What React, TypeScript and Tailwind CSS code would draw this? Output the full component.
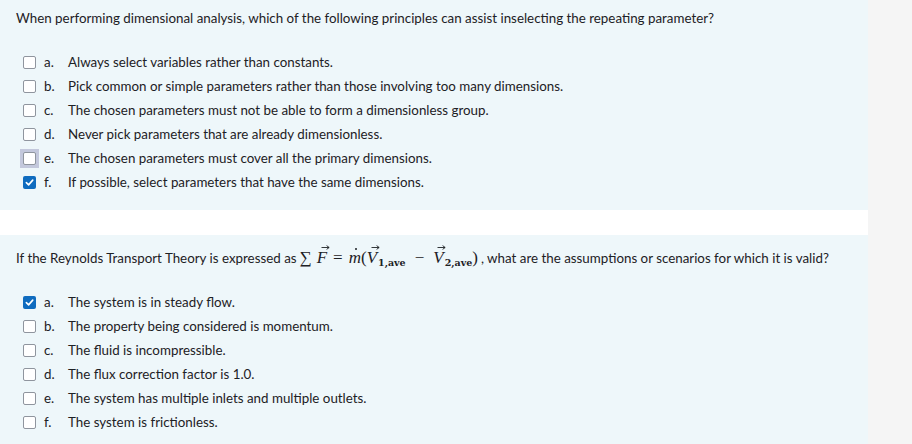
const q1 = [
  { l: "a.", t: "Always select variables rather than constants.", c: false },
  { l: "b.", t: "Pick common or simple parameters rather than those involving too many dimensions.", c: false },
  { l: "c.", t: "The chosen parameters must not be able to form a dimensionless group.", c: false },
  { l: "d.", t: "Never pick parameters that are already dimensionless.", c: false },
  { l: "e.", t: "The chosen parameters must cover all the primary dimensions.", c: false, focus: true },
  { l: "f.", t: "If possible, select parameters that have the same dimensions.", c: true },
];

const q2 = [
  { l: "a.", t: "The system is in steady flow.", c: true },
  { l: "b.", t: "The property being considered is momentum.", c: false },
  { l: "c.", t: "The fluid is incompressible.", c: false },
  { l: "d.", t: "The flux correction factor is 1.0.", c: false },
  { l: "e.", t: "The system has multiple inlets and multiple outlets.", c: false },
  { l: "f.", t: "The system is frictionless.", c: false },
];

type Opt = { l: string; t: string; c: boolean; focus?: boolean };

function Box({ checked, focus }: { checked: boolean; focus?: boolean }) {
  const box = checked ? (
    <span className="flex h-[13px] w-[13px] items-center justify-center rounded-[2px] bg-[#0f6cbf]">
      <svg width="9" height="9" viewBox="0 0 10 10">
        <path d="M1.5 5.2 L4 7.6 L8.6 2.4" fill="none" stroke="white" strokeWidth="1.8" strokeLinecap="round" strokeLinejoin="round" />
      </svg>
    </span>
  ) : (
    <span className="block h-[13px] w-[13px] rounded-[2px] border border-[#8f959e] bg-white" />
  );
  return (
    <span className={`flex h-[19px] w-[19px] items-center justify-center ${focus ? "bg-[#c3c8dc]" : ""}`}>
      {box}
    </span>
  );
}

function Options({ items }: { items: Opt[] }) {
  return (
    <div className="flex flex-col pl-[20px]">
      {items.map((o) => (
        <div key={o.t} className="flex h-[24px] items-center">
          <Box checked={o.c} focus={o.focus} />
          <span className="ml-[5px] w-[24px]">{o.l}</span>
          <span>{o.t}</span>
        </div>
      ))}
    </div>
  );
}

function Vec({ ch }: { ch: string }) {
  return (
    <span className="relative inline-block">
      <span className="italic">{ch}</span>
      <svg className="absolute left-[4px] top-[-4px]" width="9" height="5" viewBox="0 0 9 5">
        <path d="M0.5 2.5 H8 M5.6 0.6 L8.2 2.5 L5.6 4.4" fill="none" stroke="#1d2125" strokeWidth="0.9" />
      </svg>
    </span>
  );
}

function Formula() {
  return (
    <span className="mx-[3px] inline-flex items-baseline font-['Liberation_Serif',serif] text-[17px] leading-none">
      <span className="text-[17px]">∑</span>
      <span className="ml-[5px]"><Vec ch="F" /></span>
      <span className="mx-[6px]">=</span>
      <span className="relative inline-block italic">
        m
        <span className="absolute left-[6px] top-[-1px] h-[2px] w-[2px] rounded-full bg-[#1d2125]" />
      </span>
      <span>(</span>
      <Vec ch="V" />
      <span className="relative top-[3px] ml-[1px] font-['DejaVu_Serif',serif] text-[9.5px] font-bold">1,ave</span>
      <span className="mx-[9px]">−</span>
      <Vec ch="V" />
      <span className="relative top-[3px] ml-[1px] font-['DejaVu_Serif',serif] text-[9.5px] font-bold">2,ave</span>
      <span>)</span>
    </span>
  );
}

export default function App() {
  return (
    <div className="flex min-h-[444px] w-[912px] bg-[#f5f5f5] font-['Lato',sans-serif] text-[13.35px] text-[#1d2125]">
      <div className="flex w-[868px] flex-col bg-white">
        <div className="h-[210px] bg-[#eef7fa] pl-[16px] pt-[9px]">
          <p className="leading-[18px]">
            When performing dimensional analysis, which of the following principles can assist inselecting the repeating parameter?
          </p>
          <div className="mt-[23px] -ml-[16px]">
            <Options items={q1} />
          </div>
        </div>
        <div className="mt-[25px] h-[209px] bg-[#eef7fa] pl-[16px] pt-[13px]">
          <p className="flex items-baseline leading-[20px]">
            <span>If the Reynolds Transport Theory is expressed as</span>
            <Formula />
            <span>, what are the assumptions or scenarios for which it is valid?</span>
          </p>
          <div className="mt-[22px] -ml-[16px]">
            <Options items={q2} />
          </div>
        </div>
      </div>
    </div>
  );
}
